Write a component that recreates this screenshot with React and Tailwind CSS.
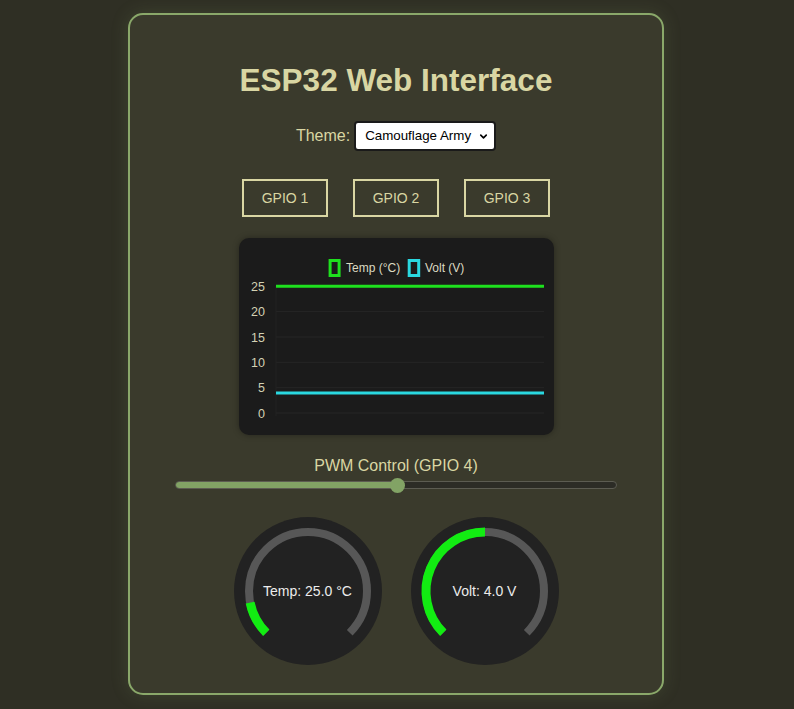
import React from 'react';
import { ChevronDown } from 'lucide-react';

function polar(cx, cy, r, deg) {
  const a = (deg * Math.PI) / 180;
  return [cx + r * Math.cos(a), cy + r * Math.sin(a)];
}

function arcPath(cx, cy, r, start, end) {
  const [x1, y1] = polar(cx, cy, r, start);
  const [x2, y2] = polar(cx, cy, r, end);
  const large = end - start > 180 ? 1 : 0;
  return `M ${x1} ${y1} A ${r} ${r} 0 ${large} 1 ${x2} ${y2}`;
}

function Gauge({ label, fraction }) {
  const start = 135;
  const end = 405;
  const fillEnd = start + (end - start) * fraction;
  return (
    <div className="relative w-[148px] h-[148px]">
      <svg width="148" height="148" viewBox="0 0 148 148">
        <circle cx="74" cy="74" r="74" fill="#222222" />
        <path d={arcPath(74, 74, 59, start, end)} fill="none" stroke="#575757" strokeWidth="8" />
        <path d={arcPath(74, 74, 59, start, fillEnd)} fill="none" stroke="#12ec12" strokeWidth="9" />
      </svg>
      <div className="absolute inset-0 flex items-center justify-center text-[14px] text-[#ececec]">
        {label}
      </div>
    </div>
  );
}

function Chart() {
  const ticks = [
    { v: 25, y: 48.3 },
    { v: 20, y: 73.6 },
    { v: 15, y: 99 },
    { v: 10, y: 124.3 },
    { v: 5, y: 149.7 },
    { v: 0, y: 175 },
  ];
  return (
    <div className="w-[315px] h-[197px] bg-[#1b1b1b] rounded-[10px] shadow-[0_0_6px_rgba(0,0,0,0.35)]">
      <svg width="315" height="197" viewBox="0 0 315 197" style={{ fontFamily: '"Liberation Sans", Arial, sans-serif' }}>
        {ticks.map((t) => (
          <g key={t.v}>
            <line x1="37" x2="305" y1={t.y} y2={t.y} stroke="#262626" strokeWidth="1" />
            <text x="26" y={t.y + 4.5} textAnchor="end" fontSize="12.5" fill="#d3d1b4">
              {t.v}
            </text>
          </g>
        ))}
        <line x1="37" x2="37" y1="48" y2="178" stroke="#222" strokeWidth="1" />

        <rect x="91.1" y="22.5" width="9" height="15" fill="#1b1b1b" stroke="#1ee01e" strokeWidth="3" />
        <text x="107" y="33.5" fontSize="12" fill="#dcdac2">Temp (°C)</text>
        <rect x="170.2" y="22.5" width="9.5" height="15" fill="#1b1b1b" stroke="#2ad8e0" strokeWidth="3" />
        <text x="186" y="33.5" fontSize="12" fill="#dcdac2">Volt (V)</text>

        <line x1="37" x2="305" y1="48.3" y2="48.3" stroke="#1ee01e" strokeWidth="3" />
        <line x1="37" x2="305" y1="155" y2="155" stroke="#2ad8e0" strokeWidth="3" />
      </svg>
    </div>
  );
}

export default function App() {
  return (
    <div
      className="min-h-[709px] bg-[#2f2f24] pt-[13px] pb-[10px]"
      style={{ fontFamily: '"Liberation Sans", Arial, sans-serif' }}
    >
      <div className="ml-[128px] w-[536px] border-2 border-[#8aa86a] rounded-[15px] bg-[#3a3a2c] shadow-[0_0_18px_rgba(138,168,106,0.18)] flex flex-col items-center pb-[28px]">
        <h1 className="mt-[47px] text-[31.5px] leading-[37px] font-bold text-[#d9d6a3]">
          ESP32 Web Interface
        </h1>

        <div className="mt-[22px] flex items-center gap-[4px] h-[30px]">
          <span className="text-[16px] text-[#d9d6a3]">Theme:</span>
          <div className="relative">
            <select
              defaultValue="army"
              className="appearance-none w-[142px] h-[30px] bg-white text-black text-[13.33px] border-2 border-[#1a1a1a] rounded-[4px] pl-[9px] pr-[20px] outline-none"
              style={{ fontFamily: '"Liberation Sans", Arial, sans-serif' }}
            >
              <option value="army">Camouflage Army</option>
              <option value="dark">Dark</option>
              <option value="light">Light</option>
            </select>
            <ChevronDown
              size={11}
              strokeWidth={3.5}
              className="absolute right-[7px] top-[10px] text-black pointer-events-none"
            />
          </div>
        </div>

        <div className="mt-[28px] flex gap-[25px]">
          {['GPIO 1', 'GPIO 2', 'GPIO 3'].map((g) => (
            <button
              key={g}
              className="w-[86px] h-[38px] border-2 border-[#d9d6a3] text-[14px] text-[#d9d6a3] bg-transparent"
            >
              {g}
            </button>
          ))}
        </div>

        <div className="mt-[21px]">
          <Chart />
        </div>

        <div className="mt-[22px] text-[16px] leading-[18px] text-[#d9d6a3]">PWM Control (GPIO 4)</div>

        <div className="mt-[2px] relative w-[442px] h-[16px] flex items-center">
          <div className="w-full h-[8px] rounded-full bg-[#2c2c26] border border-[#5c5c52] overflow-hidden">
            <div className="h-full w-[50%] bg-[#82a365]" />
          </div>
          <div className="absolute left-[215px] top-[0.5px] w-[15px] h-[15px] rounded-full bg-[#82a365]" />
        </div>

        <div className="mt-[24px] flex gap-[29px]">
          <Gauge label="Temp: 25.0 °C" fraction={0.125} />
          <Gauge label="Volt: 4.0 V" fraction={0.5} />
        </div>
      </div>
    </div>
  );
}
